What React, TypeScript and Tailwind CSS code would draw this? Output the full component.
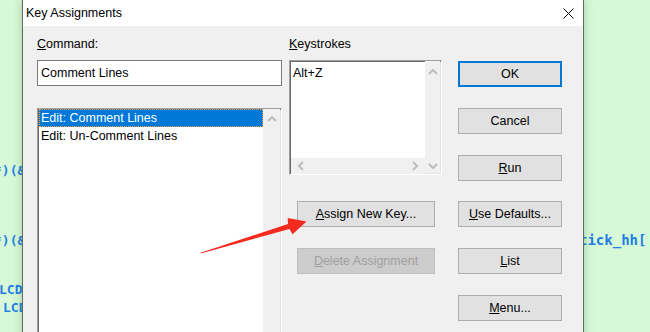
import React from "react";

const ui = "font-['Liberation_Sans',Arial,sans-serif] text-[12.5px] text-black";

const Chevron = ({ dir }: { dir: "up" | "down" | "left" | "right" }) => {
  const pts = {
    up: "1,6 5,2 9,6",
    down: "1,2 5,6 9,2",
    left: "6,1 2,5 6,9",
    right: "2,1 6,5 2,9",
  }[dir];
  const box = dir === "up" || dir === "down" ? "0 0 10 8" : "0 0 8 10";
  return (
    <svg
      viewBox={box}
      className={dir === "up" || dir === "down" ? "w-[10px] h-[8px]" : "w-[8px] h-[10px]"}
    >
      <polyline points={pts} fill="none" stroke="#bdbdbd" strokeWidth="2" />
    </svg>
  );
};

const Btn = ({
  children,
  className = "",
  disabled = false,
  focused = false,
}: {
  children: React.ReactNode;
  className?: string;
  disabled?: boolean;
  focused?: boolean;
}) => (
  <div
    className={
      "h-[26px] flex items-center justify-center leading-none " +
      (focused
        ? "border-2 border-[#0078d7] bg-[#e1e1e1] "
        : disabled
        ? "border border-[#bfbfbf] bg-[#cccccc] text-[#a0a0a0] "
        : "border border-[#adadad] bg-[#e1e1e1] ") +
      className
    }
  >
    {children}
  </div>
);

const sunken =
  "border border-t-[#a0a0a0] border-l-[#a0a0a0] border-r-white border-b-white shadow-[inset_1px_1px_0_#696969,inset_-1px_-1px_0_#e3e3e3] bg-white";

export default function App() {
  return (
    <div className="relative w-[650px] h-[332px] overflow-hidden bg-[#d7f9d7]">
      {/* editor text behind the dialog */}
      <div className="absolute inset-0 font-['DejaVu_Sans_Mono',monospace] font-bold text-[13px] text-[#1f7fe6] leading-none">
        <div className="absolute left-[-6px] top-[164px]">*)(&amp;</div>
        <div className="absolute left-[-6px] top-[234px]">*)(&amp;</div>
        <div className="absolute left-[-1px] top-[283px]">LCD_</div>
        <div className="absolute left-[3px] top-[301px]">LCD</div>
        <div className="absolute left-[579px] top-[233px] text-[14px]">tick_hh[</div>
      </div>

      {/* dialog */}
      <div
        className={
          "absolute left-[22px] top-0 w-[562px] h-[345px] border-x border-[#5e6d5e] bg-[#f0f0f0] shadow-[0_0_9px_rgba(0,60,0,0.25)] " +
          ui
        }
      >
        <div className="h-[26px] bg-white flex items-center justify-between pl-[3px] pr-[9px]">
          <span className="text-[12.5px]">Key Assignments</span>
          <svg viewBox="0 0 11 11" className="w-[11px] h-[11px]">
            <path d="M0.5 0.5 L10.5 10.5 M10.5 0.5 L0.5 10.5" stroke="#000" strokeWidth="1" />
          </svg>
        </div>

        <div className="flex pl-[14px]">
          {/* command column */}
          <div className="w-[245px] pt-[11px] flex flex-col">
            <div className="h-[15px] leading-[15px]">
              <u>C</u>ommand:
            </div>
            <div className="mt-[8px] h-[26px] border border-[#7a7a7a] bg-white flex items-center pl-[3px]">
              Comment Lines
            </div>
            <div className={"mt-[22px] h-[240px] flex " + sunken}>
              <div className="w-[225px] pl-[1px] flex flex-col">
                <div className="h-[18px] bg-[#0078d7] text-white border border-dotted border-[#f0a040] flex items-center pl-[1px]">
                  Edit: Comment Lines
                </div>
                <div className="h-[18px] flex items-center pl-[2px]">Edit: Un-Comment Lines</div>
              </div>
              <div className="flex-1 bg-[#f0f0f0] mb-px mr-px flex justify-center pt-[6px]">
                <div>
                  <Chevron dir="up" />
                </div>
              </div>
            </div>
          </div>

          {/* keystrokes column */}
          <div className="w-[153px] ml-[7px] pt-[11px] flex flex-col">
            <div className="h-[15px] leading-[15px]">
              <u>K</u>eystrokes
            </div>
            <div
              className={
                "mt-[8px] h-[115px] grid grid-cols-[1fr_16px] grid-rows-[1fr_16px] " + sunken
              }
            >
              <div className="pl-[3px] pt-[3px]">Alt+Z</div>
              <div className="bg-[#f0f0f0] mr-px flex justify-center pt-[7px]">
                <div>
                  <Chevron dir="up" />
                </div>
              </div>
              <div className="bg-[#f0f0f0] ml-px flex items-center justify-between px-[6px]">
                <Chevron dir="left" />
                <Chevron dir="right" />
              </div>
              <div className="bg-[#f0f0f0] mr-px mb-px flex items-center justify-center">
                <Chevron dir="down" />
              </div>
            </div>
            <Btn className="mt-[26px] ml-[8px] w-[138px]">
              <span>
                <u>A</u>ssign New Key...
              </span>
            </Btn>
            <Btn className="mt-[21px] ml-[8px] w-[138px]" disabled>
              <span>
                <u>D</u>elete Assignment
              </span>
            </Btn>
          </div>

          {/* buttons column */}
          <div className="w-[104px] ml-[16px] pt-[35px] flex flex-col">
            <Btn focused>OK</Btn>
            <Btn className="mt-[21px]">Cancel</Btn>
            <Btn className="mt-[21px]">
              <span>
                <u>R</u>un
              </span>
            </Btn>
            <Btn className="mt-[20px]">
              <span>
                <u>U</u>se Defaults...
              </span>
            </Btn>
            <Btn className="mt-[21px]">
              <span>
                <u>L</u>ist
              </span>
            </Btn>
            <Btn className="mt-[21px]">
              <span>
                <u>M</u>enu...
              </span>
            </Btn>
          </div>
        </div>
      </div>

      {/* red annotation arrow */}
      <svg className="absolute inset-0 w-[650px] h-[332px] pointer-events-none" viewBox="0 0 650 332">
        <polygon
          points="200.5,252.8 288,224.1 287.7,217.9 306.5,221.4 292.6,234.2 289.4,228.9 200.8,253.4"
          fill="#f22a1f"
        />
      </svg>
    </div>
  );
}
